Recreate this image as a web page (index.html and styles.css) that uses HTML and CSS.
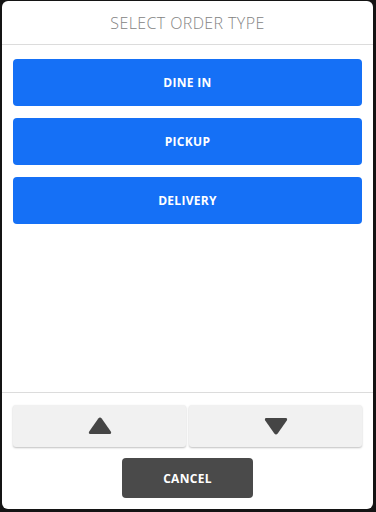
FILE: index.html
```html
<!DOCTYPE html>
<html lang="en">
<head>
    <meta charset="UTF-8">
    <meta name="viewport" content="width=device-width, initial-scale=1.0">
    <title>Select Order Type</title>
    <link rel="stylesheet" href="styles.css">
</head>
<body>
    <div class="dialog">
        <div class="dialog-header">SELECT ORDER TYPE</div>

        <div class="order-list">
            <button class="order-btn">DINE IN</button>
            <button class="order-btn">PICKUP</button>
            <button class="order-btn">DELIVERY</button>
        </div>

        <div class="dialog-footer">
            <div class="pager">
                <button class="pager-btn">
                    <svg width="24" height="18" viewBox="0 0 24 18">
                        <path d="M10.3 1.6 Q12 -0.6 13.7 1.6 L22.8 14.6 Q24 17 21.5 17 L2.5 17 Q0 17 1.2 14.6 Z" fill="#454545"/>
                    </svg>
                </button>
                <button class="pager-btn">
                    <svg width="24" height="18" viewBox="0 0 24 18">
                        <path d="M10.3 16.4 Q12 18.6 13.7 16.4 L22.8 3.4 Q24 1 21.5 1 L2.5 1 Q0 1 1.2 3.4 Z" fill="#454545"/>
                    </svg>
                </button>
            </div>
            <button class="cancel-btn">CANCEL</button>
        </div>
    </div>
</body>
</html>
```

FILE: styles.css
```css
* {
    margin: 0;
    padding: 0;
    box-sizing: border-box;
}

html, body {
    height: 100%;
}

body {
    background: #141414;
    font-family: "Open Sans", Arial, sans-serif;
    padding: 1px 3px 3px 2px;
}

.dialog {
    height: 100%;
    background: #ffffff;
    border-radius: 6px;
    display: flex;
    flex-direction: column;
    overflow: hidden;
}

.dialog-header {
    height: 44px;
    border-bottom: 1px solid #dcdcdc;
    display: flex;
    align-items: center;
    justify-content: center;
    color: #838383;
    font-size: 16px;
    font-weight: 300;
    letter-spacing: 0.4px;
}

.order-list {
    flex: 1;
    display: flex;
    flex-direction: column;
    gap: 12px;
    padding: 14px 11px 0 11px;
}

.order-btn {
    height: 47px;
    border: none;
    border-radius: 4px;
    background: #1570f6;
    color: #ffffff;
    font-family: "Open Sans", Arial, sans-serif;
    font-size: 12px;
    font-weight: 700;
    letter-spacing: 0.3px;
    cursor: pointer;
}

.dialog-footer {
    border-top: 1px solid #dcdcdc;
    padding: 12px 11px 11px 11px;
    display: flex;
    flex-direction: column;
    align-items: center;
    gap: 11px;
}

.pager {
    width: 100%;
    display: grid;
    grid-template-columns: 1fr 1fr;
    gap: 3px;
}

.pager-btn {
    height: 42px;
    border: none;
    border-radius: 3px;
    background: #f1f1f1;
    box-shadow: 0 1px 2px rgba(0, 0, 0, 0.25);
    display: flex;
    align-items: center;
    justify-content: center;
    cursor: pointer;
}

.cancel-btn {
    width: 131px;
    height: 40px;
    border: none;
    border-radius: 4px;
    background: #4a4a4a;
    color: #ffffff;
    font-family: "Open Sans", Arial, sans-serif;
    font-size: 12px;
    font-weight: 700;
    letter-spacing: 0.3px;
    cursor: pointer;
}
```
